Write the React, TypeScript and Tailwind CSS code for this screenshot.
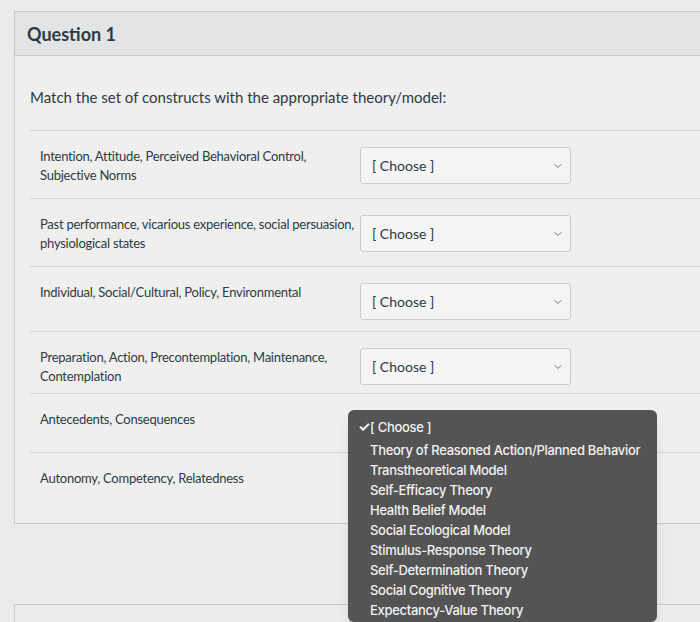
import { ChevronDown } from 'lucide-react';

const rows = [
  { text: ['Intention, Attitude, Perceived Behavioral Control,', 'Subjective Norms'], h: 'h-[68px]' },
  { text: ['Past performance, vicarious experience, social persuasion,', 'physiological states'], h: 'h-[68px]' },
  { text: ['Individual, Social/Cultural, Policy, Environmental'], h: 'h-[65px]' },
  { text: ['Preparation, Action, Precontemplation, Maintenance,', 'Contemplation'], h: 'h-[62px]' },
  { text: ['Antecedents, Consequences'], h: 'h-[59px]' },
  { text: ['Autonomy, Competency, Relatedness'], h: 'h-[71px]' },
];

const options = [
  'Theory of Reasoned Action/Planned Behavior',
  'Transtheoretical Model',
  'Self-Efficacy Theory',
  'Health Belief Model',
  'Social Ecological Model',
  'Stimulus-Response Theory',
  'Self-Determination Theory',
  'Social Cognitive Theory',
  'Expectancy-Value Theory',
];

function Select() {
  return (
    <div className="mt-[16px] flex h-[37px] w-[211px] shrink-0 items-center justify-between rounded-[3px] border border-[#c8ccd0] bg-[#f4f4f4] pl-[11px] pr-[6px] text-[14px] text-[#2d3b45]">
      <span>[ Choose ]</span>
      <ChevronDown className="h-[12px] w-[12px] text-[#55606a]" strokeWidth={1.75} />
    </div>
  );
}

export default function App() {
  return (
    <div className="relative h-[622px] w-[700px] overflow-hidden bg-[#ebebea] font-['Lato',sans-serif] text-[#2d3b45]">
      <div className="pl-[14px] pt-[11px]">
        <div className="border-b border-l border-t border-[#c5c7c9] bg-[#efefee]">
          <div className="flex h-[44px] items-center border-b border-[#c5c7c9] bg-[#e2e4e6] pl-[12px] pt-[2px] text-[18px] font-bold">
            Question 1
          </div>
          <div className="pl-[15px] pt-[31px]">
            <p className="text-[15px] leading-[20px]">
              Match the set of constructs with the appropriate theory/model:
            </p>
            <div className="mt-[23px]">
              {rows.map((r, i) => (
                <div key={i} className={`flex items-start border-t border-[#d3d5d6] pl-[10px] ${r.h}`}>
                  <div className="w-[320px] shrink-0 pt-[16px] text-[13px] leading-[19px] tracking-[-0.25px]">
                    {r.text.map((t) => (
                      <div key={t} className="whitespace-nowrap">{t}</div>
                    ))}
                  </div>
                  {i < 4 && <Select />}
                </div>
              ))}
            </div>
          </div>
        </div>
        <div className="mt-[80px] h-[40px] border-l border-t border-[#c5c7c9] bg-[#ececeb]" />
      </div>

      <div className="absolute left-[348px] top-[410px] h-[212px] w-[309px] rounded-[6px] bg-[#545454] pl-[10px] pt-[7px] font-['Inter',sans-serif] text-[13px] font-medium leading-[20px] tracking-[-0.3px] text-[#f2f2f2] shadow-lg">
        <div className="mb-[3px] flex items-center">
          <span className="w-[12px] text-[14px] font-bold">✓</span>
          <span>[ Choose ]</span>
        </div>
        {options.map((o) => (
          <div key={o} className="pl-[12px]">{o}</div>
        ))}
      </div>
    </div>
  );
}
